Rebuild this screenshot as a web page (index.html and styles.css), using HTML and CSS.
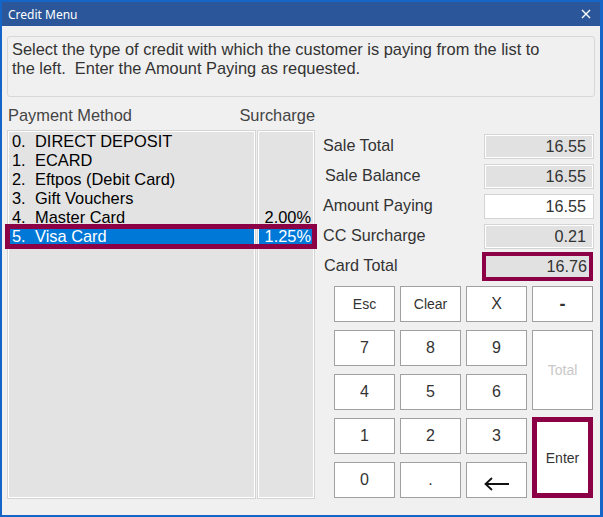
FILE: index.html
```html
<!DOCTYPE html>
<html>
<head>
<meta charset="utf-8">
<title>Credit Menu</title>
<link rel="stylesheet" href="styles.css">
</head>
<body>
<div class="window">
  <div class="titlebar">
    <span class="title">Credit Menu</span>
    <svg class="close" width="10" height="10" viewBox="0 0 10 10"><path d="M1 1L9 9M9 1L1 9" stroke="#fff" stroke-width="1.4" fill="none"/></svg>
  </div>
  <div class="content">
    <div class="instructions">Select the type of credit with which the customer is paying from the list to<br>the left.&nbsp; Enter the Amount Paying as requested.</div>
    <div class="lower">
      <div class="methods">
        <div class="methods-head"><span>Payment Method</span><span>Surcharge</span></div>
        <div class="list">
          <div class="col col-name">
            <div class="row"><span class="num">0.</span>DIRECT DEPOSIT</div>
            <div class="row"><span class="num">1.</span>ECARD</div>
            <div class="row"><span class="num">2.</span>Eftpos (Debit Card)</div>
            <div class="row"><span class="num">3.</span>Gift Vouchers</div>
            <div class="row"><span class="num">4.</span>Master Card</div>
            <div class="row sel"><span class="num">5.</span>Visa Card</div>
          </div>
          <div class="col col-rate">
            <div class="row"></div>
            <div class="row"></div>
            <div class="row"></div>
            <div class="row"></div>
            <div class="row">2.00%</div>
            <div class="row sel">1.25%</div>
          </div>
          <div class="sel-frame"></div>
        </div>
      </div>
      <div class="entry">
        <div class="field-row"><span class="label">Sale Total</span><span class="field">16.55</span></div>
        <div class="field-row"><span class="label indent2">Sale Balance</span><span class="field">16.55</span></div>
        <div class="field-row"><span class="label">Amount Paying</span><span class="field input">16.55</span></div>
        <div class="field-row"><span class="label">CC Surcharge</span><span class="field">0.21</span></div>
        <div class="field-row"><span class="label indent1">Card Total</span><span class="field total">16.76</span></div>
        <div class="keypad">
          <button class="key small">Esc</button>
          <button class="key small">Clear</button>
          <button class="key">X</button>
          <button class="key minus">-</button>
          <button class="key">7</button>
          <button class="key">8</button>
          <button class="key">9</button>
          <button class="key total">Total</button>
          <button class="key">4</button>
          <button class="key">5</button>
          <button class="key">6</button>
          <button class="key">1</button>
          <button class="key">2</button>
          <button class="key">3</button>
          <button class="key enter">Enter</button>
          <button class="key">0</button>
          <button class="key">.</button>
          <button class="key back"><svg class="arrow" width="26" height="14" viewBox="0 0 26 14"><path d="M1.5 7H25M8 1L1.5 7L8 13" stroke="#111" stroke-width="1.8" fill="none"/></svg></button>
        </div>
      </div>
    </div>
  </div>
</div>
</body>
</html>
```
FILE: styles.css
```css
* { box-sizing: border-box; }
html, body { margin: 0; padding: 0; }
body {
  width: 603px;
  height: 517px;
  overflow: hidden;
  background: #f0f0f0;
  font-family: "Liberation Sans", Arial, sans-serif;
}
.window {
  width: 603px;
  height: 517px;
  border: 2px solid #1565c8;
  border-right-width: 3px;
  background: #f0f0f0;
  display: flex;
  flex-direction: column;
}
.titlebar {
  height: 24px;
  flex: none;
  background: #2b579a;
  color: #fff;
  display: flex;
  align-items: center;
  justify-content: space-between;
  padding: 0 9px 0 6px;
  font-family: "Noto Sans", "Open Sans", sans-serif;
  font-size: 12px;
}
.close { display: block; }
.content {
  flex: 1;
  padding: 10px 5px 0 5px;
}
.instructions {
  height: 61px;
  border: 1px solid #d7d7d7;
  border-radius: 3px;
  padding: 3px 4px;
  font-size: 16.4px;
  line-height: 19px;
  color: #333;
}
.lower {
  display: flex;
  gap: 8px;
}
.methods { width: 308px; flex: none; }
.methods-head {
  display: flex;
  justify-content: space-between;
  height: 33px;
  padding: 9px 0 0 1px;
  font-size: 16.4px;
  line-height: 19px;
  color: #444;
}
.list {
  position: relative;
  display: flex;
  gap: 1px;
  height: 369px;
}
.col {
  height: 100%;
  border: 1px solid #d4d4d4;
  box-shadow: inset 0 0 0 1px #fff;
  background: #e3e3e3;
  padding: 1px;
}
.col-name { width: 249px; }
.col-rate { width: 58px; text-align: right; }
.row {
  height: 19px;
  line-height: 19px;
  font-size: 16.4px;
  color: #000;
  white-space: nowrap;
}
.col-name .row { padding-left: 3px; }
.col-rate .row { padding-right: 2px; }
.num { display: inline-block; width: 23px; }
.row.sel { background: #0078d7; color: #fff; }
.sel-frame {
  position: absolute;
  left: -2px;
  top: 94px;
  width: 312px;
  height: 25px;
  border: 5px solid #8c0046;
  pointer-events: none;
}
.entry { width: 271px; flex: none; padding-top: 37px; }
.field-row {
  display: flex;
  justify-content: space-between;
  align-items: center;
  height: 25px;
  margin-bottom: 5px;
  font-size: 16.2px;
  color: #333;
}
.label { line-height: 19px; margin-top: -2px; }
.indent2 { padding-left: 2px; }
.indent1 { padding-left: 1px; }
.field {
  width: 110px;
  height: 25px;
  border: 1px solid #d4d4d4;
  box-shadow: inset 0 0 0 1px #fff;
  background: #e1e1e1;
  text-align: right;
  padding-right: 7px;
  line-height: 23px;
}
.field.input { background: #fff; }
.field.total {
  width: 111px;
  height: 29px;
  margin: -2px 1px -2px 0;
  border: 4px solid #8c0046;
  box-shadow: none;
  line-height: 21px;
  padding-right: 2px;
}
.keypad {
  display: grid;
  grid-template-columns: repeat(4, 61px);
  grid-template-rows: repeat(5, 36px);
  column-gap: 5px;
  row-gap: 8px;
  margin: 7px 0 0 11px;
}
.key {
  margin: 0;
  padding: 0;
  background: #fff;
  border: 1px solid #a0a0a0;
  border-radius: 0;
  font-family: inherit;
  font-size: 16px;
  color: #333;
}
.key.small { font-size: 14px; }
.key.minus { font-size: 18px; font-weight: bold; }
.key.total {
  grid-column: 4;
  grid-row: 2 / span 2;
  font-size: 14px;
  color: #c8c8c8;
}
.key.enter {
  grid-column: 4;
  grid-row: 4 / span 2;
  margin-top: -1px;
  border: 5px solid #8c0046;
  font-size: 14px;
}
.key.back { display: flex; align-items: center; justify-content: center; }
.arrow { display: block; margin-top: 7px; }
```
